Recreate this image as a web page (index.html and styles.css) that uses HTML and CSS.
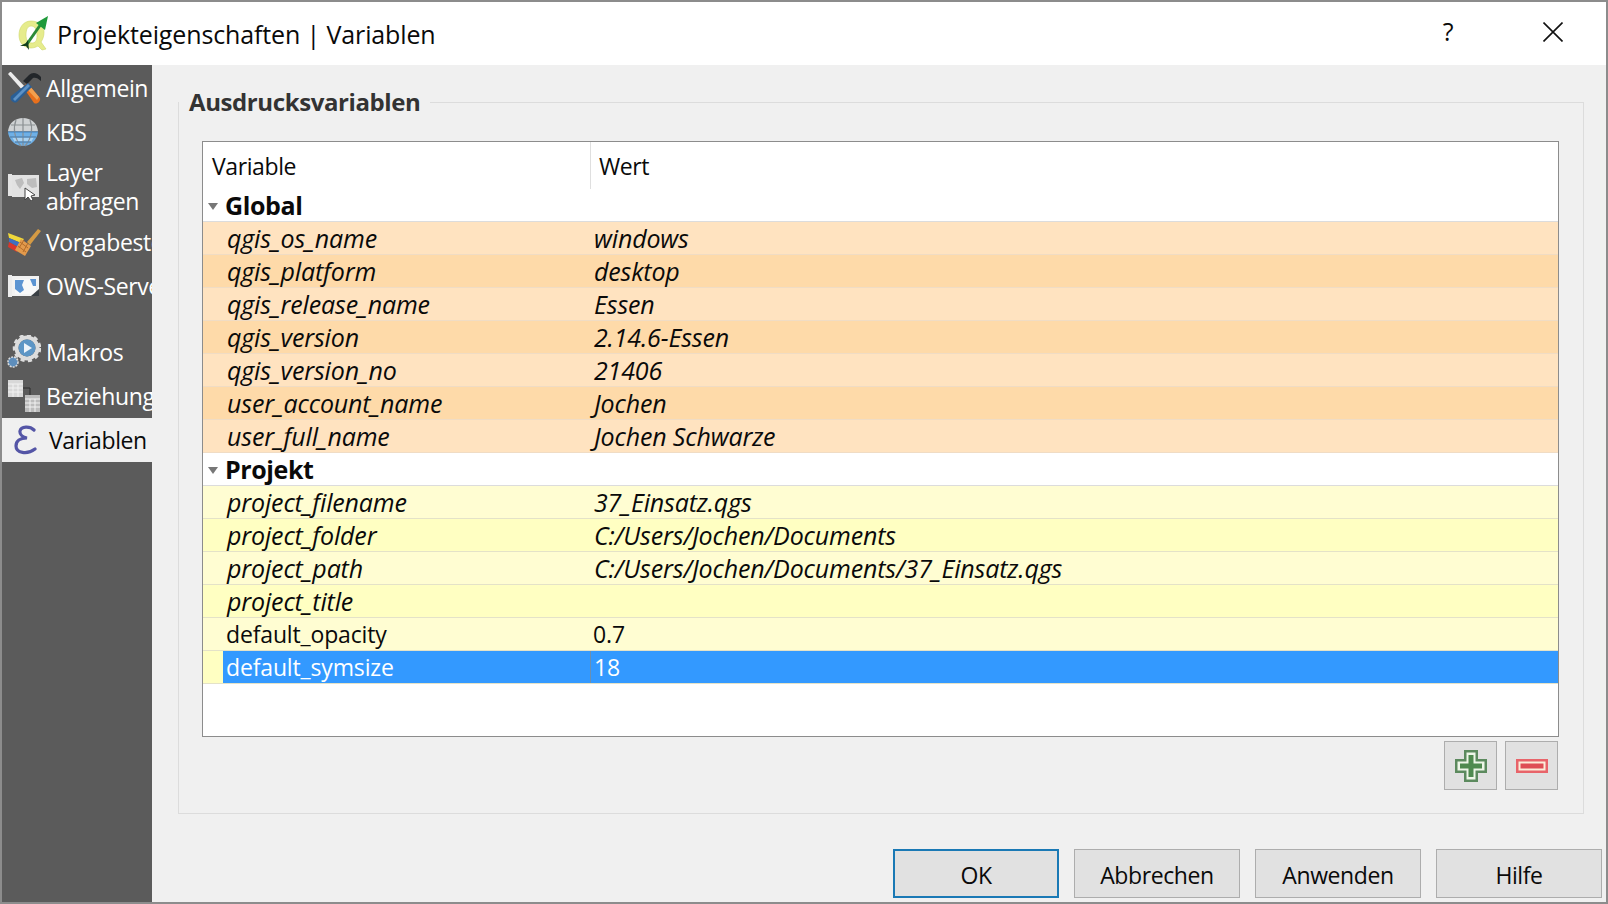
FILE: index.html
```html
<!DOCTYPE html>
<html lang="de">
<head>
<meta charset="utf-8">
<title>Projekteigenschaften | Variablen</title>
<link rel="stylesheet" href="styles.css">
</head>
<body>
<div class="window">
  <header class="titlebar">
    <svg class="logo" width="30" height="38" viewBox="0 0 30 38">
      <path d="M13 6C5 6 1 13 1 20c0 8 5 13 12 13 3 0 5-1 7-2l4 4 4-1-5-7c2-3 3-6 3-10 0-6-5-11-13-11zm0 5c4 0 6 4 6 10 0 5-2 7-5 7-4 0-6-3-6-8 0-6 2-9 5-9z" fill="#e6ec8c" stroke="#cfd66a" stroke-width=".6"/>
      <path d="M9 29 23 9" stroke="#2c8a38" stroke-width="3"/>
      <path d="M18 8 30 1l-3 14z" fill="#1f9a3a"/>
      <path d="M2 31l6-3 2-3 1 10-3-4z" fill="#123f1d"/>
    </svg>
    <span class="title">Projekteigenschaften | Variablen</span>
    <span class="help">?</span>
    <svg class="close" width="20" height="20" viewBox="0 0 20 20"><path d="M.5.5l19 19M19.5.5l-19 19" stroke="#111" stroke-width="1.6" fill="none"/></svg>
  </header>
  <div class="main">
    <nav class="sidebar">
      <div class="item h44">
        <svg class="icon" width="34" height="34" viewBox="0 0 34 34">
          <path d="M1 3l2-2 1 0 16 17-3 3z" fill="#ececec"/>
          <path d="M16 16l4-4 13 15c1 3-3 7-6 5z" fill="#e8701c"/>
          <path d="M19 17l3-3 10 12-2 3z" fill="#f3a04e"/>
          <path d="M20 13l-4-3 6-6c3-3 8-3 12 2 1 3 0 4 0 4-3-3-6-4-8-3z" fill="#22262a"/>
          <path d="M21 12l4 4-15 15c-3 2-8-2-6-6z" fill="#2a5f96"/>
          <path d="M21 13l2 2L8 30l-2-2z" fill="#5d92c6"/>
        </svg>
        <span>Allgemein</span>
      </div>
      <div class="item h44">
        <svg class="icon" width="32" height="32" viewBox="0 0 32 32">
          <path d="M1 15C2 7 8 2 16 2s14 5 15 13z" fill="#cfd2d4"/>
          <path d="M1 16h30c-1 8-7 14-15 14S2 24 1 16z" fill="#6fb0e6"/>
          <path d="M5 21h22l-3 5H8z" fill="#a8d2f2"/>
          <path d="M1 15.500h30M4 9h24M3 21h26M8 26h16M16 2v28M9 4C6 12 7 22 14 30M23 4c3 8 2 18-5 26" stroke="#8a8f92" stroke-width="1.200" fill="none"/>
          <path d="M1 16h30M3 21h26M8 26h16" stroke="#3f84c4" stroke-width="1.200" fill="none"/>
        </svg>
        <span>KBS</span>
      </div>
      <div class="item h67">
        <svg class="icon" width="33" height="28" viewBox="0 0 33 28">
          <path d="M1 1h4v22H1z" fill="#e4e4e4"/>
          <path d="M5 2h27v22H5z" fill="#e2e2e2"/>
          <path d="M8 7l7-2 2 5-4 6-3-4zM20 6l9-1 1 9-5 1-5-4z" fill="#bdbdbd"/>
          <path d="M18 15l0 12 3-3 3 4 2-1-2-4 4-1z" fill="#fff" stroke="#444" stroke-width="1"/>
        </svg>
        <span>Layer<br>abfragen</span>
      </div>
      <div class="item h43">
        <svg class="icon" width="34" height="30" viewBox="0 0 34 30">
          <path d="M1 5l16 6-3 4L2 10z" fill="#f0d83a"/>
          <path d="M2 10l12 5-3 4-9-5z" fill="#3f6fc0"/>
          <path d="M2 14l9 5-1 5-9-5z" fill="#d9372c"/>
          <path d="M20 14l11-13 3 2-11 14z" fill="#d49a44"/>
          <path d="M14 11l10 7-6 10-10-6z" fill="#e39a4c"/>
          <path d="M13 14l8 6M11 18l8 6M17 12l-5 8M21 15l-5 9" stroke="#b56d2a" fill="none"/>
        </svg>
        <span>Vorgabestellungen</span>
      </div>
      <div class="item h44">
        <svg class="icon" width="33" height="24" viewBox="0 0 33 24">
          <path d="M1 1h4v22H1z" fill="#ececec"/>
          <path d="M5 2h27v20H5z" fill="#f2f2f2"/>
          <path d="M8 5h21v15H8z" fill="#f8f8f8"/>
          <path d="M8 6h9l-2 5 2 5-4 3-5-4zM23 5h6v7l-3 0z" fill="#5c94d2"/>
          <path d="M24 22l8-7v7z" fill="#3a3f44"/>
        </svg>
        <span>OWS-Server</span>
      </div>
      <div class="spacer"></div>
      <div class="item h44">
        <svg class="icon" width="34" height="34" viewBox="0 0 34 34">
          <circle cx="20" cy="13" r="10.500" fill="none" stroke="#dcdcdc" stroke-width="4"/>
          <circle cx="20" cy="13" r="12.500" fill="none" stroke="#dcdcdc" stroke-width="3.500" stroke-dasharray="4 3.300"/>
          <circle cx="20" cy="13" r="8.500" fill="#5d96c6"/>
          <path d="M17 8l8 5-8 5z" fill="#eef4fa"/>
          <circle cx="6" cy="27" r="5" fill="#5e8ebc" stroke="#dcdcdc" stroke-width="1.600" stroke-dasharray="2 1"/>
        </svg>
        <span>Makros</span>
      </div>
      <div class="item h44">
        <svg class="icon" width="34" height="34" viewBox="0 0 34 34">
          <path d="M1 1h15v17H1z" fill="#d8d8d8"/>
          <path d="M18 16h15v17H18z" fill="#bcbcbc"/>
          <path d="M1 5h15M1 9h15M1 13h15M6 5v13M11 5v13M18 20h15M18 24h15M18 28h15M23 20v13M28 20v13" stroke="#f2f2f2" fill="none"/>
          <path d="M16 9h7v7" stroke="#2c2c2c" fill="none"/>
        </svg>
        <span>Beziehungen</span>
      </div>
      <div class="item h44 active">
        <svg class="epsilon" width="24" height="30" viewBox="0 0 24 30">
          <path d="M21 5C17 1 8 1 7 6c-.5 3 2 6 7 7-7 0-11 3-11 8 0 7 11 9 19 3" fill="none" stroke="#5455a6" stroke-width="3.200" stroke-linecap="round"/>
        </svg>
        <span>Variablen</span>
      </div>
    </nav>
    <div class="content">
      <fieldset class="group">
        <legend>Ausdrucksvariablen</legend>
        <div class="tree">
          <div class="row head"><div class="cell">Variable</div><div class="cell sep">Wert</div></div>
          <div class="row section"><div class="cell"><i class="arrow"></i>Global</div></div>
          <div class="row ro orange a"><div class="cell">qgis_os_name</div><div class="cell">windows</div></div>
          <div class="row ro orange b"><div class="cell">qgis_platform</div><div class="cell">desktop</div></div>
          <div class="row ro orange a"><div class="cell">qgis_release_name</div><div class="cell">Essen</div></div>
          <div class="row ro orange b"><div class="cell">qgis_version</div><div class="cell">2.14.6-Essen</div></div>
          <div class="row ro orange a"><div class="cell">qgis_version_no</div><div class="cell">21406</div></div>
          <div class="row ro orange b"><div class="cell">user_account_name</div><div class="cell">Jochen</div></div>
          <div class="row ro orange a"><div class="cell">user_full_name</div><div class="cell">Jochen Schwarze</div></div>
          <div class="row section"><div class="cell"><i class="arrow"></i>Projekt</div></div>
          <div class="row ro yellow a"><div class="cell">project_filename</div><div class="cell">37_Einsatz.qgs</div></div>
          <div class="row ro yellow b"><div class="cell">project_folder</div><div class="cell">C:/Users/Jochen/Documents</div></div>
          <div class="row ro yellow a"><div class="cell">project_path</div><div class="cell">C:/Users/Jochen/Documents/37_Einsatz.qgs</div></div>
          <div class="row ro yellow b"><div class="cell">project_title</div><div class="cell"></div></div>
          <div class="row custom yellow a"><div class="cell">default_opacity</div><div class="cell">0.7</div></div>
          <div class="row custom yellow b selected"><div class="cell">default_symsize</div><div class="cell">18</div></div>
        </div>
        <div class="tools">
          <button class="tool" type="button" aria-label="Hinzufügen">
            <svg width="32" height="32" viewBox="0 0 32 32">
              <path d="M9 0h14v9h9v14h-9v9H9v-9H0V9h9z" fill="#5c8a5e"/>
              <path d="M11.500 2.500h9v9h9v9h-9v9h-9v-9h-9v-9h9z" fill="#eef6e8"/>
              <path d="M13.500 5h5v8.500H27v5h-8.500V27h-5v-8.500H5v-5h8.500z" fill="#4f8a4f"/>
            </svg>
          </button>
          <button class="tool" type="button" aria-label="Entfernen">
            <svg width="32" height="14" viewBox="0 0 32 14">
              <path d="M0 0h32v14H0z" fill="#e8646a"/>
              <path d="M2.500 2.500h27v9h-27z" fill="#fbeeda"/>
              <path d="M4.500 4.500h23v5h-23z" fill="#de4f55"/>
            </svg>
          </button>
        </div>
      </fieldset>
      <footer class="footer">
        <button class="btn default" type="button">OK</button>
        <button class="btn" type="button">Abbrechen</button>
        <button class="btn" type="button">Anwenden</button>
        <button class="btn" type="button">Hilfe</button>
      </footer>
    </div>
  </div>
</div>
</body>
</html>
```
FILE: styles.css
```css
* { box-sizing: border-box; }
html, body { margin: 0; padding: 0; }
body {
  width: 1608px;
  height: 904px;
  overflow: hidden;
  font-family: "Open Sans", "Noto Sans", sans-serif;
  font-size: 23px;
  letter-spacing: -0.4px;
  color: #0a0a0a;
}
.window {
  width: 1608px;
  height: 904px;
  border: 2px solid #8c8c8c;
  display: flex;
  flex-direction: column;
  background: #f0f0f0;
}
.titlebar {
  height: 63px;
  flex: none;
  display: flex;
  align-items: center;
  background: #fff;
  padding-left: 16px;
}
.logo { flex: none; margin-right: 9px; }
.title { flex: 1; font-size: 25px; letter-spacing: -0.13px; }
.help { width: 20px; text-align: center; margin-right: 85px; font-size: 25px; margin-top: -6px; }
.close { flex: none; margin-right: 43px; margin-top: -4px; }
.main { flex: 1; display: flex; min-height: 0; }
.sidebar {
  width: 150px;
  flex: none;
  background: #5b5b5b;
  color: #fff;
  overflow: hidden;
  display: flex;
  flex-direction: column;
  padding-top: 1px;
}
.item {
  display: grid;
  grid-template-columns: 39px 1fr;
  align-items: center;
  white-space: nowrap;
  padding-left: 5px;
  line-height: 29px;
  flex: none;
  letter-spacing: -0.4px;
}
.h44 { height: 44px; }
.h43 { height: 43px; }
.h67 { height: 67px; padding-bottom: 2px; }
.spacer { height: 22px; flex: none; }
.item.active { background: #f0f0f0; color: #0a0a0a; grid-template-columns: 42px 1fr; }
.epsilon { margin-left: 6px; }
.content {
  flex: 1;
  min-width: 0;
  display: flex;
  flex-direction: column;
  padding: 20px 4px 4px 26px;
}
.group {
  margin: 0 18px 0 0;
  padding: 22px 24px 23px 23px;
  border: 1px solid #dcdcdc;
  min-width: 0;
}
.group legend {
  font-size: 24px;
  font-weight: 700;
  color: #333;
  line-height: 34px;
  padding: 0 10px;
  margin-left: -23px;
}
.tree {
  height: 596px;
  border: 1px solid #8c8c8c;
  background: #fff;
}
.row {
  display: grid;
  grid-template-columns: 387px 1fr;
  height: 33px;
  line-height: 32px;
  white-space: nowrap;
  border-bottom: 1px solid transparent;
}
.cell { min-width: 0; }
.row .cell:first-child { padding-left: 23px; }
.row .cell:last-child { padding-left: 3px; }
.row.head { height: 47px; line-height: 48px; }
.row.head .cell:first-child { padding-left: 9px; }
.row.head .sep { border-left: 1px solid #dfdfdf; padding-left: 8px; height: 47px; }
.section { font-size: 25px; font-weight: 700; border-bottom-color: #dcdcdc; grid-template-columns: 1fr; }
.row.section .cell:first-child { padding-left: 5px; }
.arrow {
  display: inline-block;
  width: 0;
  height: 0;
  border-left: 5.5px solid transparent;
  border-right: 5.5px solid transparent;
  border-top: 7px solid #777;
  margin: 0 7px 3px 0;
  vertical-align: middle;
}
.ro .cell { font-style: italic; font-size: 25px; letter-spacing: -0.15px; }
.row.ro .cell:first-child { padding-left: 24px; }
.row.ro .cell:last-child { padding-left: 4px; }
.custom { letter-spacing: -0.15px; }
.orange.a { background: #ffe3c0; border-bottom-color: #f0dcc4; }
.orange.b { background: #fedaa9; border-bottom-color: #f0dcc4; }
.yellow.a { background: #fffdd2; border-bottom-color: #e4e2c8; }
.yellow.b { background: #ffffc2; border-bottom-color: #e4e2c8; }
.selected { border-bottom-color: transparent; color: #fff; }
.selected .cell { background: #3399ff; }
.row.selected .cell:first-child { margin-left: 20px; padding-left: 3px; }
.row.selected .cell:last-child { border-left: 1px solid #6b8fb0; padding-left: 3px; }
.tools {
  display: flex;
  justify-content: flex-end;
  gap: 8px;
  margin-top: 4px;
  padding-right: 1px;
}
.tool {
  width: 53px;
  height: 49px;
  padding: 0;
  display: flex;
  align-items: center;
  justify-content: center;
  background: #e1e1e1;
  border: 1px solid #adadad;
}
.footer {
  margin-top: auto;
  display: flex;
  justify-content: flex-end;
  gap: 15px;
}
.btn {
  width: 166px;
  height: 49px;
  padding: 2px 0 0;
  font: inherit;
  letter-spacing: inherit;
  color: inherit;
  background: #e1e1e1;
  border: 1px solid #adadad;
}
.btn.default { border: 2px solid #1a79b5; }
```
